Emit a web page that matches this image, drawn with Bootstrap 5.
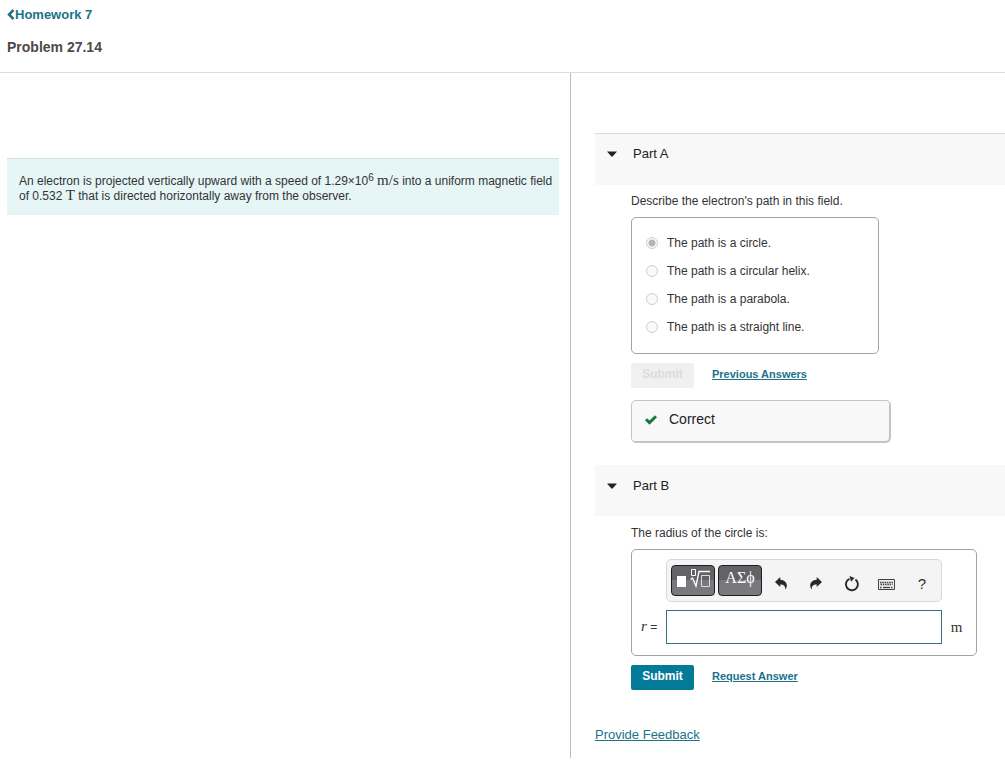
<!DOCTYPE html>
<html lang="en">
<head>
<meta charset="utf-8">
<meta name="viewport" content="width=device-width, initial-scale=1">
<title>Problem 27.14</title>
<link href="https://cdn.jsdelivr.net/npm/bootstrap@5.3.0/dist/css/bootstrap.min.css" rel="stylesheet">
<style>
  body { font-family: "Liberation Sans", Arial, sans-serif; font-size: 12px; line-height: 15px; color: #333; }
  a { color: #1c7288; }
  .page-head { height: 73px; padding: 7px; border-bottom: 1px solid #dcdcdc; }
  .back-link { font-size: 13px; line-height: 15px; }
  .page-title { font-size: 14px; line-height: 16px; margin: 15px 0 0; color: #4a4a4a; }
  .work-area { display: grid; grid-template-columns: 1fr 434px; }
  .question-pane { padding: 85px 11px 0 7px; border-right: 1px solid #b4bfc8; }
  .question { background: #e6f5f6; border-top: 1px solid #d3dfe0; padding: 15px 2px 11px 12px; min-height: 57px; }
  .tex { font-family: "Liberation Serif", serif; font-size: 15px; line-height: 12px; }
  .question sup { font-size: 10px; line-height: 0; top: -4px; }
  .answer-pane { padding: 60px 0 15px 24px; }
  .part-head { background: #f8f8f8; height: 51px; padding: 12px; border: 0; border-top: 1px solid #f8f8f8; gap: 16px; width: 100%; font-size: 13px; line-height: 16px; color: #222; }
  .part-first { height: 52px; border-top-color: #dadada; }
  .part-body { padding: 9px 28px 22px 36px; }
  .choices { width: 248px; height: 137px; margin-top: 8px; padding: 18px 14px; border: 1px solid #a3a3a3; border-radius: 5px; }
  .choices .form-check { display: flex; align-items: center; gap: 9px; margin: 0 0 13px; padding: 0; min-height: 0; line-height: 15px; }
  .choices .form-check-input { float: none; margin: 0 0 2px; width: 12px; height: 12px; border-color: #cfcfcf; background-color: #fafafa; opacity: 1; }
  .choices .form-check-input:checked { background-image: radial-gradient(circle, #b5b5b5 0 3px, #fafafa 4px); }
  .choices .form-check-input:disabled ~ .form-check-label { opacity: 1; }
  .actions { margin-top: 9px; gap: 18px; font-size: 11px; }
  .actions a { padding-bottom: 2px; }
  .btn-send { width: 63px; height: 25px; padding: 0 0 3px; border: 0; border-radius: 2px; font-size: 12px; line-height: 15px; font-weight: 700; background: #047a99; color: #fff; }
  .btn-send:hover { background: #03657f; color: #fff; }
  .btn-send:disabled { background: #f0f0f0; color: #dcdcdc; opacity: 1; }
  .verdict { width: 260px; height: 43px; margin-top: 12px; padding: 0 12px 4px; gap: 11px; background: #f8f8f8; border: 1px solid #c4c4c4; border-radius: 5px; box-shadow: inset -1px -1px 0 #c4c4c4; font-size: 14px; color: #222; }
  .entry { margin-top: 8px; padding: 9px 9px 11px; border: 1px solid #a3a3a3; border-radius: 5px; display: grid; grid-template-columns: 25px 1fr 25px; row-gap: 8px; align-items: center; }
  .tools { grid-column: 2; height: 43px; padding: 0 3px 0 4px; background: #f4f4f4; border: 1px solid #d8d8d8; border-radius: 5px; gap: 3px; }
  .tools button { height: 31px; padding: 0; border: 0; background: none; color: #333; line-height: 15px; }
  .tools .key { width: 44px; border: 1px solid #1e1e1e; border-radius: 4px; background: linear-gradient(#626267 0 50%, #78787d 50% 100%); color: #fff; }
  .tools .greek { font-family: "Liberation Serif", serif; font-size: 16px; padding-bottom: 6px; }
  .tools .tool-icon { flex: 1; padding-top: 5px; font-size: 15px; }
  .tools svg, .verdict svg, .part-head svg, .back-link svg { display: block; }
  .value-box { height: 34px; border: 1px solid #356f80; border-radius: 0; padding: 4px 8px; font-size: 14px; }
  .value-label { grid-column: 1; }
  .feedback { font-size: 13px; line-height: 15px; margin-top: 14px; display: inline-block; }
  .entry-body { padding: 10px 28px 23px 36px; }
  @media (max-width: 767px) { .work-area { grid-template-columns: 1fr; } .question-pane { padding-top: 24px; border: 0; } }
</style>
</head>
<body>
<header class="page-head">
  <a href="#" class="back-link d-inline-flex align-items-center fw-bold text-decoration-none">
    <svg width="8" height="11" viewBox="0 0 8 11" aria-hidden="true"><path d="M6.500 1 2 5.500 6.500 10" fill="none" stroke="currentColor" stroke-width="2.500"/></svg>Homework 7</a>
  <h1 class="page-title fw-bold">Problem 27.14</h1>
</header>
<main class="work-area">
  <section class="question-pane">
    <div class="question">An electron is projected vertically upward with a speed of 1.29×10<sup>6</sup> <span class="tex">m/s</span> into a uniform magnetic field of 0.532 <span class="tex">T</span> that is directed horizontally away from the observer.</div>
  </section>
  <section class="answer-pane">
    <button type="button" class="part-head part-first d-flex align-items-start text-start">
      <svg width="10" height="16" viewBox="0 0 10 16" aria-hidden="true"><path d="M0 5.500h10L5.800 10.300Q5 11 4.200 10.300z" fill="#222"/></svg><span>Part A</span>
    </button>
    <div class="part-body">
      <div>Describe the electron's path in this field.</div>
      <div class="choices">
        <div class="form-check"><input class="form-check-input" type="radio" name="path" id="p1" checked disabled><label class="form-check-label" for="p1">The path is a circle.</label></div>
        <div class="form-check"><input class="form-check-input" type="radio" name="path" id="p2" disabled><label class="form-check-label" for="p2">The path is a circular helix.</label></div>
        <div class="form-check"><input class="form-check-input" type="radio" name="path" id="p3" disabled><label class="form-check-label" for="p3">The path is a parabola.</label></div>
        <div class="form-check"><input class="form-check-input" type="radio" name="path" id="p4" disabled><label class="form-check-label" for="p4">The path is a straight line.</label></div>
      </div>
      <div class="actions d-flex align-items-center">
        <button type="button" class="btn btn-send" disabled>Submit</button>
        <a href="#" class="fw-bold">Previous Answers</a>
      </div>
      <div class="verdict d-flex align-items-center">
        <svg width="14" height="12" viewBox="0 0 14 12" aria-hidden="true"><path d="M1 6.300 3 4.300 5.500 6.600 11 1.300 13 3.300 5.500 10.800z" fill="#157a3c"/></svg><span>Correct</span>
      </div>
    </div>
    <button type="button" class="part-head d-flex align-items-start text-start">
      <svg width="10" height="16" viewBox="0 0 10 16" aria-hidden="true"><path d="M0 5.500h10L5.800 10.300Q5 11 4.200 10.300z" fill="#222"/></svg><span>Part B</span>
    </button>
    <div class="part-body entry-body">
      <div>The radius of the circle is:</div>
      <div class="entry">
        <div class="tools d-flex align-items-center">
          <button type="button" class="key" aria-label="Templates">
            <svg width="42" height="29" viewBox="0 0 42 29" aria-hidden="true"><path d="M5 10h9v11H5z" fill="#fff"/><g fill="none" stroke="#fff"><path d="M19.500 3.500h4v6h-4z"/><path d="M18.500 13.500 20.500 12l3.500 8 3-14.500H38" stroke-width="1.300"/><path d="M29.500 9.500h8v11h-8z" stroke="#ddd"/></g></svg>
          </button>
          <button type="button" class="key greek">ΑΣϕ</button>
          <button type="button" class="tool-icon d-flex justify-content-center align-items-center" aria-label="Undo"><svg width="14" height="14" viewBox="0 0 14 14"><path d="M1 6 6.300 1v2.700C10.500 4 12.800 6.500 12.800 9.500c0 1.600-.7 3-1.600 4C11.500 10 10 8.500 6.300 8.400V11z" fill="#292929"/></svg></button>
          <button type="button" class="tool-icon d-flex justify-content-center align-items-center" aria-label="Redo"><svg width="14" height="14" viewBox="0 0 14 14"><path d="M13 6 7.700 1v2.700C3.500 4 1.200 6.500 1.200 9.500c0 1.600.7 3 1.600 4C2.500 10 4 8.500 7.700 8.400V11z" fill="#292929"/></svg></button>
          <button type="button" class="tool-icon d-flex justify-content-center align-items-center" aria-label="Reset"><svg width="16" height="17" viewBox="0 0 16 17"><path d="M5.500 3.800A6 6 0 1 0 11.500 4.500" fill="none" stroke="#292929" stroke-width="1.900"/><path d="M5.500 1 10.500 3 7 6.800z" fill="#292929"/></svg></button>
          <button type="button" class="tool-icon d-flex justify-content-center align-items-center" aria-label="Keyboard"><svg width="17" height="15" viewBox="0 0 17 15"><path d="M.5 3.500h16v10H.5z" fill="#eee" stroke="#444"/><path d="M2 6.500h13M2.500 8.500h12M2 11.500h2m9 0h2" stroke="#444" stroke-width="1.300" stroke-dasharray="1.500 .8"/><path d="M5 11.500h7" stroke="#444" stroke-width="1.300"/></svg></button>
          <button type="button" class="tool-icon d-flex justify-content-center align-items-center" aria-label="Help">?</button>
        </div>
        <label for="radius" class="value-label"><span class="tex fst-italic">r</span> =</label>
        <input id="radius" type="text" class="form-control value-box" autocomplete="off">
        <span class="tex text-center ps-1">m</span>
      </div>
      <div class="actions d-flex align-items-center">
        <button type="button" class="btn btn-send">Submit</button>
        <a href="#" class="fw-bold">Request Answer</a>
      </div>
    </div>
    <a href="#" class="feedback">Provide Feedback</a>
  </section>
</main>
<script src="https://cdn.jsdelivr.net/npm/bootstrap@5.3.0/dist/js/bootstrap.bundle.min.js"></script>
</body>
</html>
